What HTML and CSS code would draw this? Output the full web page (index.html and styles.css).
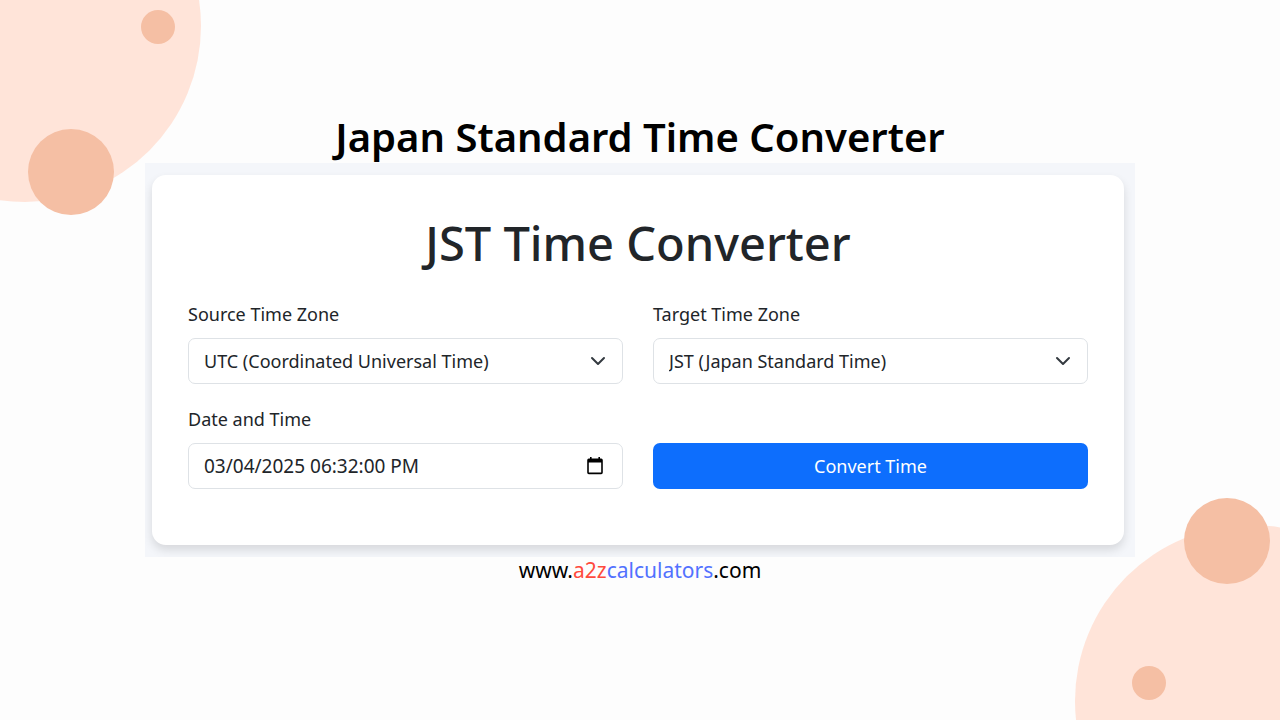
FILE: index.html
```html
<!DOCTYPE html>
<html lang="en">

<head>
    <meta charset="UTF-8">
    <meta name="viewport" content="width=device-width, initial-scale=1.0">
    <title>Japan Standard Time Converter</title>
    <link rel="stylesheet" href="styles.css">
</head>

<body>
    <svg class="decor decor-top" viewBox="0 0 216 222" aria-hidden="true">
        <circle class="light" cx="25" cy="26" r="176"></circle>
        <circle class="dark" cx="71" cy="172" r="43"></circle>
        <circle class="dark" cx="158" cy="27" r="17"></circle>
    </svg>
    <svg class="decor decor-bottom" viewBox="0 0 216 222" aria-hidden="true">
        <circle class="light" cx="187" cy="203" r="176"></circle>
        <circle class="dark" cx="163" cy="43" r="43"></circle>
        <circle class="dark" cx="85" cy="185" r="17"></circle>
    </svg>

    <main class="page">
        <h1 class="page-title">Japan Standard Time Converter</h1>

        <section class="panel">
            <form class="card" id="converterForm">
                <h2 class="card-title">JST Time Converter</h2>

                <div class="form-grid">
                    <div class="form-group">
                        <label for="sourceZone">Source Time Zone</label>
                        <div class="control-wrap">
                            <select id="sourceZone" class="control">
                                <option>UTC (Coordinated Universal Time)</option>
                            </select>
                            <svg class="icon chevron" viewBox="0 0 16 16" aria-hidden="true">
                                <path d="m2 5 6 6 6-6"></path>
                            </svg>
                        </div>
                    </div>

                    <div class="form-group">
                        <label for="targetZone">Target Time Zone</label>
                        <div class="control-wrap">
                            <select id="targetZone" class="control">
                                <option>JST (Japan Standard Time)</option>
                            </select>
                            <svg class="icon chevron" viewBox="0 0 16 16" aria-hidden="true">
                                <path d="m2 5 6 6 6-6"></path>
                            </svg>
                        </div>
                    </div>

                    <div class="form-group">
                        <label for="dateTime">Date and Time</label>
                        <div class="control-wrap">
                            <input type="text" id="dateTime" class="control date-control" value="03/04/2025 06:32:00 PM">
                            <svg class="icon calendar" viewBox="0 0 18 18" aria-hidden="true">
                                <path fill-rule="evenodd" d="M4 0h1.6v1.6h6.8V0H14v1.6h1.2q1.6 0 1.6 1.6v12.4q0 1.6-1.6 1.6H2.8q-1.6 0-1.6-1.6V3.2q0-1.6 1.6-1.6H4zM2.8 5.6v10h12.4v-10z"></path>
                            </svg>
                        </div>
                    </div>

                    <button type="submit" class="btn">Convert Time</button>
                </div>
            </form>
        </section>

        <a class="site-link" href="https://www.a2zcalculators.com">www.<span class="red">a2z</span><span class="blue">calculators</span>.com</a>
    </main>
</body>

</html>
```
FILE: styles.css
```css
* {
    box-sizing: border-box;
}

body {
    position: relative;
    min-height: 100vh;
    margin: 0;
    background-color: #fdfdfd;
    color: #212529;
    font-family: "Noto Sans", "Open Sans", sans-serif;
}

/* Background circles */
.decor {
    position: absolute;
    width: 216px;
    height: 222px;
    overflow: hidden;
}

.decor-top {
    top: 0;
    left: 0;
}

.decor-bottom {
    right: 0;
    bottom: 0;
}

.light {
    fill: #ffe4d9;
}

.dark {
    fill: #f5bfa4;
}

.page {
    position: relative;
    display: flex;
    flex-direction: column;
    align-items: center;
    max-width: 990px;
    margin: 0 auto;
    padding-top: 111px;
}

.page-title {
    margin: 0;
    color: #000;
    font-size: 40px;
    font-weight: 600;
    line-height: 52px;
}

.panel {
    width: 100%;
    padding: 12px 11px 12px 7px;
    overflow: hidden;
    background-color: #f4f6fa;
}

.card {
    padding: 36px 36px 56px;
    border-radius: 14px;
    background-color: #fff;
    box-shadow: 0 5px 10px rgba(0, 0, 0, 0.12);
}

.card-title {
    margin: 0 0 24px;
    font-size: 47px;
    font-weight: 500;
    line-height: 64px;
    text-align: center;
}

.form-grid {
    display: grid;
    grid-template-columns: 1fr 1fr;
    gap: 20px 30px;
    align-items: end;
}

label {
    display: block;
    margin-bottom: 9px;
    font-size: 18px;
    line-height: 30px;
}

.control {
    display: block;
    width: 100%;
    height: 46px;
    padding: 0 15px;
    border: 1px solid #dee2e6;
    border-radius: 7px;
    background-color: #fff;
    color: #212529;
    font-family: inherit;
    font-size: 18px;
    appearance: none;
}

.date-control {
    font-size: 19px;
}

.control-wrap {
    position: relative;
}

.icon {
    position: absolute;
    pointer-events: none;
}

.chevron {
    top: 15px;
    right: 17px;
    width: 16px;
    height: 16px;
    fill: none;
    stroke: #343a40;
    stroke-width: 2;
    stroke-linecap: round;
    stroke-linejoin: round;
}

.calendar {
    top: 14px;
    right: 19px;
    width: 18px;
    height: 18px;
    fill: #000;
}

.btn {
    height: 46px;
    border: none;
    border-radius: 7px;
    background-color: #0d6efd;
    color: #fff;
    font-family: inherit;
    font-size: 18px;
    cursor: pointer;
}

.btn:hover {
    background-color: #0b5ed7;
}

.site-link {
    color: #000;
    font-size: 21px;
    line-height: 26px;
    text-decoration: none;
}

.red {
    color: #ff4a3d;
}

.blue {
    color: #5271ff;
}
```
